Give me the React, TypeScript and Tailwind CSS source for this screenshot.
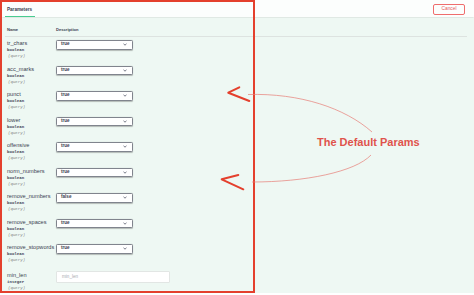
import React from "react";

const rows: { name: string; value: string }[] = [
  { name: "tr_chars", value: "true" },
  { name: "acc_marks", value: "true" },
  { name: "punct", value: "true" },
  { name: "lower", value: "true" },
  { name: "offensive", value: "true" },
  { name: "norm_numbers", value: "true" },
  { name: "remove_numbers", value: "false" },
  { name: "remove_spaces", value: "true" },
  { name: "remove_stopwords", value: "true" },
];

function NameBlock({ name, type }: { name: string; type: string }) {
  return (
    <div className="w-[51px] pl-[2px] flex flex-col">
      <div className="text-[5.6px] leading-[8px] text-[#3b4151] whitespace-nowrap">{name}</div>
      <div className="text-[4.1px] leading-[6px] font-bold text-[#3b4151] font-['Liberation_Mono',monospace]">
        {type}
      </div>
      <div className="pl-[1px] text-[4.1px] leading-[6px] italic text-[#808080] font-['Liberation_Mono',monospace]">
        (query)
      </div>
    </div>
  );
}

export default function App() {
  return (
    <div className="relative w-[474px] h-[295px] bg-white overflow-hidden font-['Liberation_Sans',Arial,sans-serif]">
      <div className="h-[293px] bg-[#eef8f3] flex flex-col">
        {/* section header */}
        <div className="h-[17px] bg-[#fcfefd] flex items-start justify-between pl-[5px] pr-[9px] shadow-[0_0.5px_1px_rgba(0,0,0,0.06)]">
          <div className="h-full w-[30px] flex flex-col justify-end">
            <div className="pl-[2px] pb-[4px] text-[4.6px] leading-[5px] font-bold text-[#3b4151]">Parameters</div>
            <div className="h-[1.2px] bg-[#49cc90]" />
          </div>
          <button className="mt-[4px] w-[32px] h-[11px] border border-[#ef6d6d] rounded-[2px] bg-transparent text-[4.8px] leading-none text-[#e5585a] flex items-center justify-center">
            Cancel
          </button>
        </div>

        <div className="ml-[5px] mr-[7px]">
          <div className="h-[20px] flex items-end pb-[4px] border-b border-[#dde3e0] text-[4.1px] leading-[5px] font-bold text-[#3b4151]">
            <div className="w-[51px] pl-[2px]">Name</div>
            <div>Description</div>
          </div>

          <div className="pt-[2px]">
            {rows.map((r) => (
              <div key={r.name} className="flex h-[25.5px]">
                <NameBlock name={r.name} type="boolean" />
                <div className="mt-[1px] w-[77px] h-[9.5px] bg-white border-[0.8px] border-[#80848d] rounded-[1.5px] shadow-[0_0.5px_1px_rgba(0,0,0,0.25)] flex items-center justify-between pl-[4px] pr-[5px]">
                  <span className="text-[4.6px] leading-none font-bold text-[#3b4151]">{r.value}</span>
                  <svg width="4" height="3" viewBox="0 0 4 3">
                    <path d="M0.5 0.8 L2 2.2 L3.5 0.8" fill="none" stroke="#3b4151" strokeWidth="0.7" />
                  </svg>
                </div>
              </div>
            ))}
            <div className="flex pt-[2.5px]">
              <NameBlock name="min_len" type="integer" />
              <div className="w-[114px] h-[12px] bg-white border-[0.6px] border-[#e2e6e4] rounded-[1px] flex items-center pl-[5px]">
                <span className="text-[4.6px] leading-none text-[#a9acb2]">min_len</span>
              </div>
            </div>
          </div>
        </div>
      </div>

      {/* annotation overlay */}
      <div className="absolute left-0 top-0 w-[255px] h-[293px] border-[2.5px] border-[#e4402d] pointer-events-none" />
      <svg
        className="absolute left-0 top-0 pointer-events-none"
        width="474"
        height="295"
        viewBox="0 0 474 295"
      >
        <path d="M239.3 87.3 L228.3 92.7 L249.3 101" fill="none" stroke="#e4402d" strokeWidth="2" strokeLinecap="round" strokeLinejoin="round" />
        <path d="M238.3 175 L221.7 179.3 L243.3 189.3" fill="none" stroke="#e4402d" strokeWidth="2" strokeLinecap="round" strokeLinejoin="round" />
        <path d="M248 94.5 C300 93 345 108 372 132" fill="none" stroke="#e77d76" strokeWidth="0.7" />
        <path d="M252 182 C305 182 355 172 371 155" fill="none" stroke="#e77d76" strokeWidth="0.7" />
      </svg>
      <div className="absolute left-[317px] top-[135px] text-[11px] leading-[14px] font-bold text-[#e0534b] whitespace-nowrap">
        The Default Params
      </div>
    </div>
  );
}
